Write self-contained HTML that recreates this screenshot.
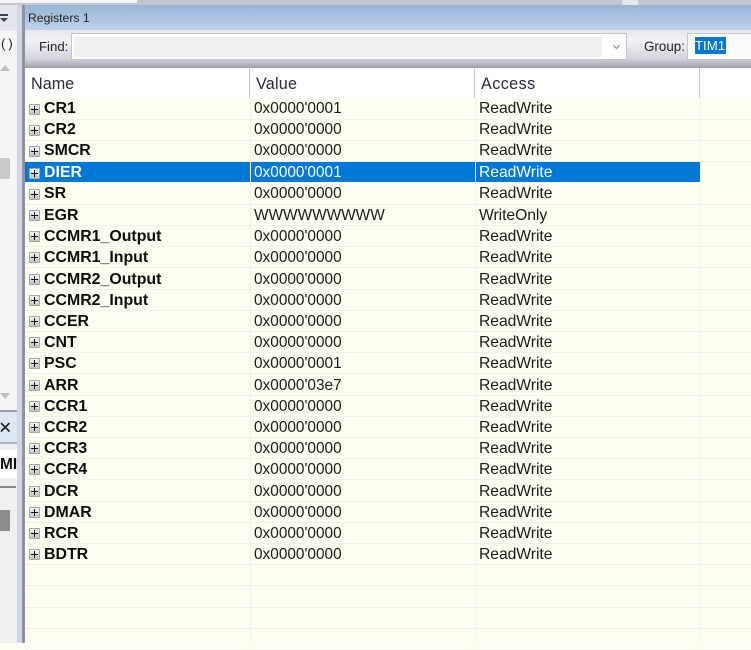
<!DOCTYPE html>
<html><head><meta charset="utf-8"><style>
html,body{margin:0;padding:0}
body{width:751px;height:643px;overflow:hidden;position:relative;background:#fefff0;font-family:"Liberation Sans",sans-serif;color:#1a1a1a}
.a{position:absolute}
.r{position:absolute;left:25px;width:726px;height:21px;border-bottom:1px solid #f1f1ee;box-sizing:content-box}
.r b,.r i,.r u{position:absolute;top:1px;font-style:normal;text-decoration:none;line-height:20px;white-space:nowrap}
.g b,.g i,.g u,.g~.r b,.g~.r i,.g~.r u{top:2px}
.r b{left:19px;font-size:15.9px;color:#0c0c0c}
.r i{left:229px;font-size:15.4px}
.r u{left:454px;font-size:15.7px;letter-spacing:-.05px}
.p{position:absolute;left:4px;top:6px;width:9px;height:9px;border:1px solid #9aa8b4;border-radius:1px;background:linear-gradient(#f4f4f4,#c4c4c4)}
.p:before{content:"";position:absolute;left:1px;top:4px;width:7px;height:1px;background:#111}
.p:after{content:"";position:absolute;left:4px;top:1px;width:1px;height:7px;background:#111}
.s{background:#0078d7;border-bottom:0;width:675px;height:20px}
.s b,.s i,.s u{color:#fff}
.v{position:absolute;top:98px;height:545px;width:1px;background:#f1f1ee;z-index:2}
.h{position:absolute;top:75px;font-size:16.2px;line-height:18px;color:#2a2a3a}
</style></head><body>
<!-- top strip -->
<div class="a" style="left:0;top:0;width:751px;height:5px;background:#c4c4d2"></div>
<div class="a" style="left:0;top:0;width:137px;height:3px;background:#f6f6f6"></div>
<div class="a" style="left:622px;top:0;width:16px;height:5px;background:#e6e8f0"></div>
<!-- left pane -->
<div class="a" style="left:0;top:5px;width:17px;height:638px;background:#f0f0f0"></div>
<div class="a" style="left:17px;top:5px;width:5px;height:638px;background:#d3d6e4"></div>
<div class="a" style="left:22px;top:5px;width:3px;height:638px;background:#8f93a4"></div>
<div class="a" style="left:0;top:5px;width:17px;height:26px;background:#e4e6ee"></div>
<div class="a" style="left:0;top:14px;width:8px;height:2px;background:#444"></div>
<div class="a" style="left:0;top:18px;width:0;height:0;border-left:4px solid transparent;border-right:4px solid transparent;border-top:4px solid #444"></div>
<div class="a" style="left:0;top:31px;width:17px;height:379px;background:#f5f5f5"></div>
<div class="a" style="left:1px;top:37px;font-size:13px;line-height:14px;letter-spacing:3px;color:#222">()</div>
<div class="a" style="left:0;top:65px;width:0;height:0;border-left:5px solid transparent;border-right:5px solid transparent;border-bottom:6px solid #bdbdbd"></div>
<div class="a" style="left:0;top:158px;width:10px;height:21px;background:#c9c9c9"></div>
<div class="a" style="left:0;top:393px;width:0;height:0;border-left:5px solid transparent;border-right:5px solid transparent;border-top:6px solid #bdbdbd"></div>
<div class="a" style="left:0;top:410px;width:17px;height:2px;background:#9c9c9c"></div>
<div class="a" style="left:0;top:412px;width:17px;height:30px;background:#dfe8f3"></div>
<svg class="a" style="left:0;top:422px" width="11" height="11"><path d="M1 1L9.5 9.5M9.5 1L1 9.5" fill="none" stroke="#222" stroke-width="1.6"/></svg>
<div class="a" style="left:0;top:442px;width:17px;height:2px;background:#b5b5b5"></div>
<div class="a" style="left:0;top:450px;width:17px;height:28px;background:#fff"></div>
<div class="a" style="left:0;top:456px;width:17px;height:18px;overflow:hidden;font-size:15.5px;font-weight:bold;line-height:18px;color:#111">MI</div>
<div class="a" style="left:0;top:486px;width:16px;height:2px;background:#888"></div>
<div class="a" style="left:0;top:510px;width:10px;height:21px;background:#8c8c8c"></div>
<!-- title bar -->
<div class="a" style="left:25px;top:5px;width:726px;height:25px;background:linear-gradient(#99b5d4,#bdd3e9)"></div>
<div class="a" style="left:28px;top:11px;font-size:12.2px;line-height:15px;color:#222">Registers 1</div>
<!-- toolbar -->
<div class="a" style="left:25px;top:30px;width:726px;height:38px;background:linear-gradient(#e6e6ee,#f2f2f6 30%,#d4d4de 75%,#a0a0ac)"></div>
<div class="a" style="left:39px;top:39px;font-size:13.2px;line-height:16px;color:#222">Find:</div>
<div class="a" style="left:71px;top:33px;width:556px;height:27px;background:#fff;border:1px solid #c4c4cc;box-sizing:border-box"></div>
<div class="a" style="left:74px;top:37px;width:528px;height:20px;background:#f0f0f0"></div>
<svg class="a" style="left:612px;top:44px" width="9" height="6"><path d="M1.5 1.5L4.5 4.5L7.5 1.5" fill="none" stroke="#888" stroke-width="1"/></svg>
<div class="a" style="left:644px;top:39px;font-size:13.4px;line-height:16px;color:#222">Group:</div>
<div class="a" style="left:687px;top:33px;width:64px;height:27px;background:#fbfbfd;border:1px solid #c4c4cc;border-right:0;box-sizing:border-box"></div>
<div class="a" style="left:695px;top:37px;width:31px;height:17px;background:#0078d7;color:#fff;font-size:13.2px;line-height:17px;overflow:hidden">TIM1</div>
<!-- header -->
<div class="a" style="left:25px;top:68px;width:726px;height:30px;background:#fff"></div>
<div class="a" style="left:249px;top:68px;width:1px;height:30px;background:#c8c8cc"></div>
<div class="a" style="left:474px;top:68px;width:1px;height:30px;background:#c8c8cc"></div>
<div class="a" style="left:699px;top:68px;width:1px;height:30px;background:#c8c8cc"></div>
<div class="h" style="left:31px">Name</div>
<div class="h" style="left:256px;letter-spacing:.2px">Value</div>
<div class="h" style="left:481px;letter-spacing:.4px">Access</div>
<!-- rows -->
<div class="v" style="left:250px"></div>
<div class="v" style="left:475px"></div>
<div class="v" style="left:700px"></div>
<div class="r" style="top:98px"><span class="p"></span><b>CR1</b><i>0x0000'0001</i><u>ReadWrite</u></div>
<div class="r" style="top:119px"><span class="p"></span><b>CR2</b><i>0x0000'0000</i><u>ReadWrite</u></div>
<div class="r" style="top:140px"><span class="p"></span><b>SMCR</b><i>0x0000'0000</i><u>ReadWrite</u></div>
<div class="r s" style="top:162px"><span class="p"></span><b>DIER</b><i>0x0000'0001</i><u>ReadWrite</u></div>
<div class="r" style="top:183px"><span class="p"></span><b>SR</b><i>0x0000'0000</i><u>ReadWrite</u></div>
<div class="r g" style="top:204px"><span class="p"></span><b>EGR</b><i>WWWWWWWWW</i><u>WriteOnly</u></div>
<div class="r" style="top:225px"><span class="p"></span><b>CCMR1_Output</b><i>0x0000'0000</i><u>ReadWrite</u></div>
<div class="r" style="top:246px"><span class="p"></span><b>CCMR1_Input</b><i>0x0000'0000</i><u>ReadWrite</u></div>
<div class="r" style="top:268px"><span class="p"></span><b>CCMR2_Output</b><i>0x0000'0000</i><u>ReadWrite</u></div>
<div class="r" style="top:289px"><span class="p"></span><b>CCMR2_Input</b><i>0x0000'0000</i><u>ReadWrite</u></div>
<div class="r" style="top:310px"><span class="p"></span><b>CCER</b><i>0x0000'0000</i><u>ReadWrite</u></div>
<div class="r" style="top:331px"><span class="p"></span><b>CNT</b><i>0x0000'0000</i><u>ReadWrite</u></div>
<div class="r" style="top:352px"><span class="p"></span><b>PSC</b><i>0x0000'0001</i><u>ReadWrite</u></div>
<div class="r" style="top:374px"><span class="p"></span><b>ARR</b><i>0x0000'03e7</i><u>ReadWrite</u></div>
<div class="r" style="top:395px"><span class="p"></span><b>CCR1</b><i>0x0000'0000</i><u>ReadWrite</u></div>
<div class="r" style="top:416px"><span class="p"></span><b>CCR2</b><i>0x0000'0000</i><u>ReadWrite</u></div>
<div class="r" style="top:437px"><span class="p"></span><b>CCR3</b><i>0x0000'0000</i><u>ReadWrite</u></div>
<div class="r" style="top:458px"><span class="p"></span><b>CCR4</b><i>0x0000'0000</i><u>ReadWrite</u></div>
<div class="r" style="top:480px"><span class="p"></span><b>DCR</b><i>0x0000'0000</i><u>ReadWrite</u></div>
<div class="r" style="top:501px"><span class="p"></span><b>DMAR</b><i>0x0000'0000</i><u>ReadWrite</u></div>
<div class="r" style="top:522px"><span class="p"></span><b>RCR</b><i>0x0000'0000</i><u>ReadWrite</u></div>
<div class="r" style="top:543px"><span class="p"></span><b>BDTR</b><i>0x0000'0000</i><u>ReadWrite</u></div>
<div class="r" style="top:564px"></div>
<div class="r" style="top:586px"></div>
<div class="r" style="top:607px"></div>
<div class="r" style="top:628px"></div>
</body></html>
